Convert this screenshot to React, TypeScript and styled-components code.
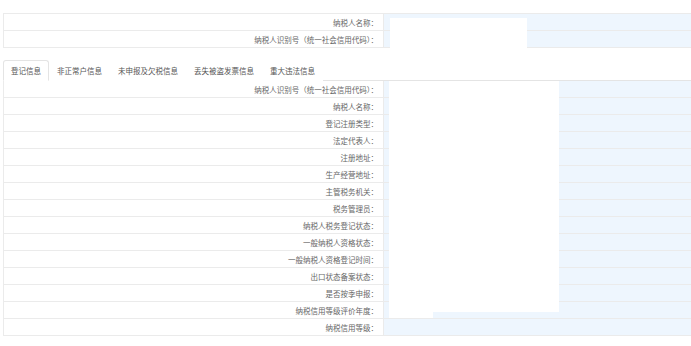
import React, { useState } from 'react'
import styled, { createGlobalStyle } from 'styled-components'

const GlobalStyle = createGlobalStyle`
  html, body {
    margin: 0;
    padding: 0;
    background: #fff;
  }
  body {
    font-family: "Noto Sans CJK SC", "Noto Sans", sans-serif;
    font-size: 7.5px;
    color: #666;
  }
`

const topRows = ['纳税人名称：', '纳税人识别号（统一社会信用代码）：']

const tabs = ['登记信息', '非正常户信息', '未申报及欠税信息', '丢失被盗发票信息', '重大违法信息']

const infoRows = [
  '纳税人识别号（统一社会信用代码）：',
  '纳税人名称：',
  '登记注册类型：',
  '法定代表人：',
  '注册地址：',
  '生产经营地址：',
  '主管税务机关：',
  '税务管理员：',
  '纳税人税务登记状态：',
  '一般纳税人资格状态：',
  '一般纳税人资格登记时间：',
  '出口状态备案状态：',
  '是否按季申报：',
  '纳税信用等级评价年度：',
  '纳税信用等级：',
]

const App = () => {
  const [active, setActive] = useState(0)

  return (
    <Page>
      <GlobalStyle />
      <TableBox>
        <Table>
          {topRows.map((label) => (
            <Row key={label}>
              <Label>{label}</Label>
              <Value />
            </Row>
          ))}
        </Table>
        <Mask $left={387} $top={5} $width={137} $height={30} />
      </TableBox>

      <TabBar>
        {tabs.map((tab, i) => (
          <Tab key={tab} $active={i === active} onClick={() => setActive(i)}>
            {tab}
          </Tab>
        ))}
      </TabBar>

      <TableBox>
        <Table $noTop>
          {infoRows.map((label) => (
            <Row key={label}>
              <Label>{label}</Label>
              <Value />
            </Row>
          ))}
        </Table>
        <Mask $left={386} $top={0} $width={170} $height={231} />
        <Mask $left={386} $top={231} $width={44} $height={6} />
      </TableBox>
    </Page>
  )
}

export default App

const Page = styled.div`
  width: 691px;
  padding: 13px 0 0 3px;
  box-sizing: border-box;
`

const TableBox = styled.div`
  position: relative;
`

const Table = styled.div<{ $noTop?: boolean }>`
  display: flex;
  flex-direction: column;
  border-top: ${({ $noTop }) => ($noTop ? 'none' : '1px solid #ebebeb')};
  border-left: 1px solid #ebebeb;
`

const Row = styled.div`
  display: grid;
  grid-template-columns: 380px 1fr;
  height: 17px;
  border-bottom: 1px solid #ebebeb;
  box-sizing: border-box;
`

const Label = styled.div`
  display: flex;
  align-items: center;
  justify-content: flex-end;
  padding-right: 5px;
  color: #666;
  background: #fff;
  border-right: 1px solid #ebebeb;
  white-space: nowrap;
`

const Value = styled.div`
  background: #eef6fe;
`

const Mask = styled.div<{ $left: number; $top: number; $width: number; $height: number }>`
  position: absolute;
  left: ${({ $left }) => $left}px;
  top: ${({ $top }) => $top}px;
  width: ${({ $width }) => $width}px;
  height: ${({ $height }) => $height}px;
  background: #fff;
`

const TabBar = styled.div`
  display: flex;
  align-items: flex-end;
  margin-top: 11px;
  height: 21px;
  border-bottom: 1px solid #e4e4e4;
`

const Tab = styled.div<{ $active?: boolean }>`
  display: flex;
  align-items: center;
  height: 21px;
  padding: 0 7px;
  box-sizing: border-box;
  margin-bottom: -1px;
  color: #555;
  cursor: pointer;
  white-space: nowrap;
  background: #fff;
  border: 1px solid ${({ $active }) => ($active ? '#e4e4e4' : 'transparent')};
  border-bottom-color: ${({ $active }) => ($active ? '#fff' : 'transparent')};
  border-radius: 3px 3px 0 0;
`
